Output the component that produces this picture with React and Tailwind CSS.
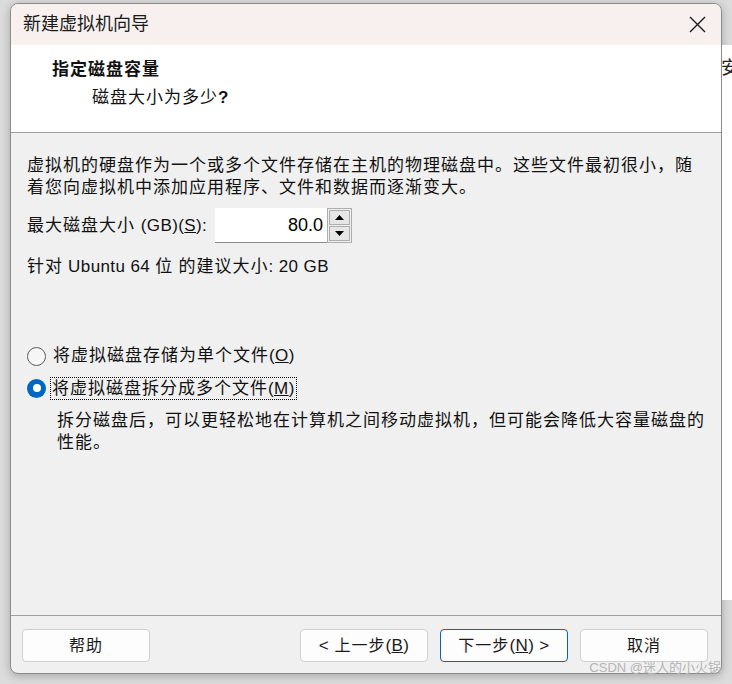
import React from 'react';

const FONT = "font-['Liberation_Sans','Noto_Sans_CJK_SC',sans-serif]";

// latin runs use tighter metrics than the CJK text around them
const L = ({ children }) => (
  <span className="text-[17px] tracking-[0.4px]">{children}</span>
);

const Radio = ({ checked }) =>
  checked ? (
    <span className="w-[19px] h-[19px] rounded-full bg-[#0067c0] flex items-center justify-center shrink-0">
      <span className="w-[8px] h-[8px] rounded-full bg-white" />
    </span>
  ) : (
    <span className="w-[19px] h-[19px] rounded-full border border-[#5a5a5a] bg-[#f6f6f6] shrink-0" />
  );

const Btn = ({ children, primary }) => (
  <button
    className={`w-[128px] h-[33px] rounded-[4px] bg-[#fdfdfd] text-[16px] tracking-[1px] text-[#1a1a1a] flex items-center justify-center border ${
      primary ? 'border-[#0067c0]' : 'border-[#d0d0d0]'
    }`}
  >
    {children}
  </button>
);

export default function App() {
  return (
    <div className={`relative w-[732px] h-[684px] overflow-hidden bg-[#dcdcdc] flex ${FONT}`}>
      {/* dialog */}
      <div className="ml-[10px] mt-[3px] w-[712px] h-[671px] shrink-0 flex flex-col rounded-[8px] border border-[#8c8c8c] bg-[#f0f0f0] overflow-hidden shadow-[0_2px_10px_rgba(0,0,0,0.25)]">
        {/* title bar */}
        <div className="h-[41px] shrink-0 bg-[#f8f0ee] flex items-center pl-[12px] pr-[15px]">
          <span className="text-[18px] text-[#1a1a1a]">新建虚拟机向导</span>
          <svg className="ml-auto" width="17" height="17" viewBox="0 0 17 17">
            <path d="M1 1 L16 16 M16 1 L1 16" stroke="#1a1a1a" strokeWidth="1.4" fill="none" />
          </svg>
        </div>

        {/* header */}
        <div className="h-[88px] shrink-0 bg-white border-b border-[#a0a0a0] pt-[14px] text-[#111]">
          <div className="pl-[41px] h-[22px] leading-[22px] text-[17px] tracking-[1px] font-bold">指定磁盘容量</div>
          <div className="pl-[81px] mt-[6px] h-[22px] leading-[22px] text-[17px] tracking-[1px]">
            磁盘大小为多少<span className="text-[17px] font-bold tracking-normal">?</span>
          </div>
        </div>

        {/* body */}
        <div className="flex-1 px-[16px] pt-[22px] text-[17px] tracking-[1px] leading-[22px] text-[#111]">
          <div>虚拟机的硬盘作为一个或多个文件存储在主机的物理磁盘中。这些文件最初很小，随</div>
          <div>着您向虚拟机中添加应用程序、文件和数据而逐渐变大。</div>

          <div className="mt-[9px] h-[35px] flex items-center">
            <span className="w-[188px] shrink-0">
              最大磁盘大小 <L>(GB)(<u>S</u>):</L>
            </span>
            <div className="w-[112px] h-[35px] bg-white border-b border-[#8a8a8a] flex items-center justify-end pr-[4px]">
              <span className="text-[18px] tracking-normal text-black">80.0</span>
            </div>
            <div className="w-[25px] h-[35px] border border-[#adadad] flex flex-col p-[1px] gap-[1px] bg-[#f0f0f0]">
              <div className="flex-1 border border-[#adadad] bg-[#e6e6e6] flex items-center justify-center">
                <svg width="9" height="5" viewBox="0 0 9 5"><path d="M4.5 0 L9 5 L0 5 Z" fill="#000" /></svg>
              </div>
              <div className="flex-1 border border-[#adadad] bg-[#e6e6e6] flex items-center justify-center">
                <svg width="9" height="5" viewBox="0 0 9 5"><path d="M0 0 L9 0 L4.5 5 Z" fill="#000" /></svg>
              </div>
            </div>
          </div>

          <div className="mt-[13px]">
            针对<L> Ubuntu 64 </L>位<L> </L>的建议大小<L>: 20 GB</L>
          </div>

          <div className="mt-[66px] h-[24px] flex items-center">
            <Radio />
            <span className="ml-[7px]">
              将虚拟磁盘存储为单个文件<L>(<u>O</u>)</L>
            </span>
          </div>
          <div className="mt-[8px] h-[24px] flex items-center">
            <Radio checked />
            <span className="ml-[4px] px-[1px] border border-dotted border-black leading-[21px]">
              将虚拟磁盘拆分成多个文件<L>(<u>M</u>)</L>
            </span>
          </div>
          <div className="mt-[10px] pl-[30px]">
            <div>拆分磁盘后，可以更轻松地在计算机之间移动虚拟机，但可能会降低大容量磁盘的</div>
            <div>性能。</div>
          </div>
        </div>

        {/* footer */}
        <div className="h-[58px] shrink-0 border-t border-[#a0a0a0] flex pt-[13px] pl-[11px] pr-[13px]">
          <Btn>帮助</Btn>
          <div className="ml-auto flex gap-[12px]">
            <Btn>
              <L>&lt;</L>&nbsp;上一步<L>(<u>B</u>)</L>
            </Btn>
            <Btn primary>
              下一步<L>(<u>N</u>) &gt;</L>
            </Btn>
            <Btn>取消</Btn>
          </div>
        </div>
      </div>

      {/* window behind, right edge */}
      <div className="mt-[45px] h-[555px] w-[10px] bg-white overflow-hidden">
        <div className="mt-[12px] text-[18px] leading-[22px] -ml-[1px] text-[#222]">安</div>
      </div>

      {/* watermark */}
      <div className="absolute right-[11px] top-[660px] text-[13px] leading-[16px] text-[#b5b5b5] whitespace-nowrap">
        CSDN @迷人的小火锅
      </div>
    </div>
  );
}
